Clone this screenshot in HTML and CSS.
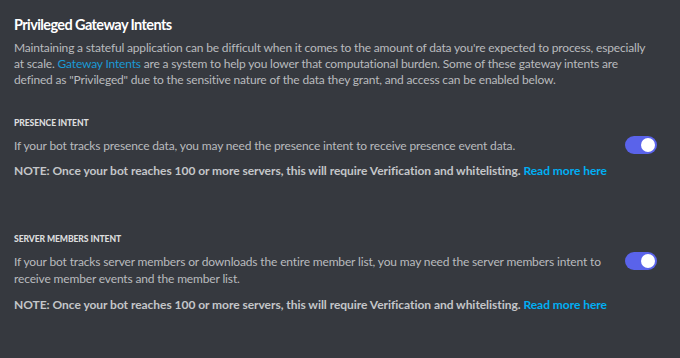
FILE: index.html
```html
<!DOCTYPE html>
<html>
<head>
<meta charset="utf-8">
<link rel="stylesheet" href="styles.css">
</head>
<body>
<div class="page">
  <h2 class="title">Privileged Gateway Intents</h2>
  <p class="intro">Maintaining a stateful application can be difficult when it comes to the amount of data you're expected to process, especially at scale. <a class="link-dim">Gateway Intents</a> are a system to help you lower that computational burden. Some of these gateway intents are defined as "Privileged" due to the sensitive nature of the data they grant, and access can be enabled below.</p>

  <section class="intent intent-presence">
    <h3 class="label">PRESENCE INTENT</h3>
    <div class="row">
      <p class="desc">If your bot tracks presence data, you may need the presence intent to receive presence event data.</p>
      <span class="toggle"><span class="knob"></span></span>
    </div>
    <p class="note">NOTE: Once your bot reaches 100 or more servers, this will require Verification and whitelisting. <a class="link">Read more here</a></p>
  </section>

  <section class="intent intent-members">
    <h3 class="label">SERVER MEMBERS INTENT</h3>
    <div class="row">
      <p class="desc">If your bot tracks server members or downloads the entire member list, you may need the server members intent to receive member events and the member list.</p>
      <span class="toggle"><span class="knob"></span></span>
    </div>
    <p class="note">NOTE: Once your bot reaches 100 or more servers, this will require Verification and whitelisting. <a class="link">Read more here</a></p>
  </section>
</div>
</body>
</html>
```
FILE: styles.css
```css
html, body {
  margin: 0;
  padding: 0;
  background: #36393f;
  height: 100%;
}
body {
  font-family: Lato, "Noto Sans", sans-serif;
  color: #b9bbbe;
}
.page {
  padding: 15px 23px 0 14px;
}
.title {
  margin: 0;
  font-size: 14.5px;
  font-weight: 700;
  letter-spacing: -0.6px;
  color: #ffffff;
  line-height: 20px;
}
.intro {
  margin: 5px 0 0;
  max-width: 640px;
  font-size: 12px;
  letter-spacing: -0.17px;
  line-height: 16px;
}
.link-dim {
  color: #1a9ad6;
}
.link {
  color: #00aff4;
}
.intent-presence {
  margin-top: 29px;
}
.intent-members {
  margin-top: 54px;
}
.label {
  margin: 0;
  font-size: 8.6px;
  font-weight: 900;
  letter-spacing: -0.1px;
  color: #dcddde;
  line-height: 12px;
}
.row {
  display: flex;
  align-items: flex-start;
  justify-content: space-between;
  margin-top: 7.5px;
}
.desc {
  margin: 0;
  font-size: 12px;
  letter-spacing: -0.15px;
  line-height: 17px;
  max-width: 590px;
}
.toggle {
  width: 32px;
  height: 18px;
  margin-top: -1px;
  border-radius: 9px;
  background: #5a63ea;
  display: flex;
  align-items: center;
  justify-content: flex-end;
  padding: 0 2px;
  box-sizing: border-box;
  flex: none;
}
.knob {
  width: 14px;
  height: 14px;
  border-radius: 50%;
  background: #ffffff;
}
.note {
  margin: 8.5px 0 0;
  font-size: 12px;
  font-weight: 700;
  letter-spacing: -0.04px;
  line-height: 17px;
  color: #c4c6c9;
}
.intent-members .note {
  margin-top: 9px;
}
```
